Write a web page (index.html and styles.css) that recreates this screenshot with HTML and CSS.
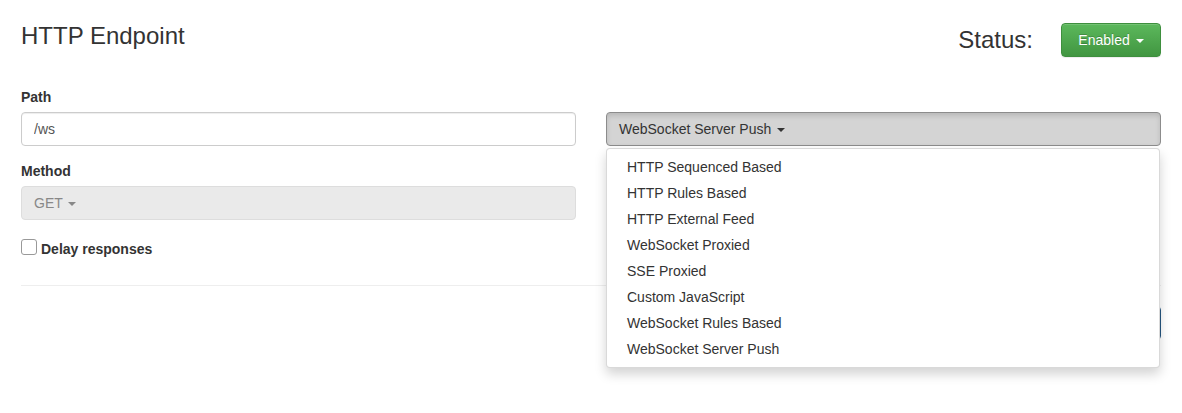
FILE: index.html
```html
<!DOCTYPE html>
<html lang="en">
<head>
    <meta charset="UTF-8">
    <meta name="viewport" content="width=device-width, initial-scale=1.0">
    <title>HTTP Endpoint</title>
    <link rel="stylesheet" href="styles.css">
</head>
<body>

    <div class="page">
        <!-- Header -->
        <div class="header">
            <h3 class="title">HTTP Endpoint</h3>
            <div class="status">
                <span class="status-label">Status:</span>
                <button class="btn btn-success">Enabled <span class="caret"></span></button>
            </div>
        </div>

        <!-- Form -->
        <div class="form-row">
            <div class="col">
                <div class="form-group">
                    <label class="field-label" for="path">Path</label>
                    <input type="text" id="path" class="form-control" value="/ws">
                </div>

                <div class="form-group">
                    <label class="field-label">Method</label>
                    <div class="form-control disabled">GET <span class="caret"></span></div>
                </div>

                <label class="checkbox">
                    <span class="check-box"></span>
                    <span>Delay responses</span>
                </label>
            </div>

            <div class="col col-type">
                <div class="btn-group">
                    <button class="btn btn-default active">WebSocket Server Push <span class="caret"></span></button>
                    <ul class="dropdown-menu">
                        <li><a href="#">HTTP Sequenced Based</a></li>
                        <li><a href="#">HTTP Rules Based</a></li>
                        <li><a href="#">HTTP External Feed</a></li>
                        <li><a href="#">WebSocket Proxied</a></li>
                        <li><a href="#">SSE Proxied</a></li>
                        <li><a href="#">Custom JavaScript</a></li>
                        <li><a href="#">WebSocket Rules Based</a></li>
                        <li><a href="#">WebSocket Server Push</a></li>
                    </ul>
                </div>
            </div>
        </div>

        <hr class="divider">

        <div class="footer">
            <button class="btn btn-primary">Save Changes</button>
        </div>
    </div>

</body>
</html>
```

FILE: styles.css
```css
/* Page */
body {
    margin: 0;
    font-family: "Liberation Sans", Arial, sans-serif;
    font-size: 14px;
    line-height: 20px;
    color: #333;
    background: #fff;
}

.page {
    box-sizing: border-box;
    min-height: 100vh;
    padding: 23px 21px 0;
}

/* Header */
.header {
    display: flex;
    justify-content: space-between;
    align-items: flex-start;
}

.title {
    margin: 0;
    font-size: 24px;
    font-weight: normal;
    line-height: 26.4px;
}

.status {
    display: flex;
    align-items: center;
    gap: 28px;
}

.status-label {
    font-size: 24px;
    line-height: 34px;
}

/* Buttons */
.btn {
    font-family: inherit;
    font-size: 14px;
    line-height: 20px;
    height: 34px;
    padding: 6px 12px;
    border: 1px solid transparent;
    border-radius: 4px;
    cursor: pointer;
}

.btn-success {
    width: 100px;
    color: #fff;
    background: linear-gradient(to bottom, #5cb85c 0, #419641 100%);
    border-color: #3e8f3e;
    text-shadow: 0 -1px 0 rgba(0, 0, 0, .2);
    box-shadow: inset 0 1px 0 rgba(255, 255, 255, .15), 0 1px 1px rgba(0, 0, 0, .075);
}

.btn-default.active {
    width: 100%;
    text-align: left;
    color: #333;
    background: #d4d4d4;
    border-color: #8c8c8c;
    box-shadow: inset 0 3px 5px rgba(0, 0, 0, .125);
}

.btn-primary {
    color: #fff;
    background: linear-gradient(to bottom, #337ab7 0, #265a88 100%);
    border-color: #245580;
}

.caret {
    display: inline-block;
    width: 0;
    height: 0;
    margin-left: 2px;
    vertical-align: middle;
    border-top: 4px solid;
    border-left: 4px solid transparent;
    border-right: 4px solid transparent;
}

/* Form */
.form-row {
    display: grid;
    grid-template-columns: 1fr 1fr;
    gap: 30px;
    margin-top: 30px;
}

.form-group {
    margin-bottom: 15px;
}

.field-label {
    display: block;
    margin-bottom: 5px;
    font-weight: bold;
}

.form-control {
    display: block;
    box-sizing: border-box;
    width: 100%;
    height: 34px;
    padding: 6px 12px;
    font-family: inherit;
    font-size: 14px;
    line-height: 20px;
    color: #555;
    background: #fff;
    border: 1px solid #ccc;
    border-radius: 4px;
    box-shadow: inset 0 1px 1px rgba(0, 0, 0, .075);
}

.form-control.disabled {
    color: #888;
    background: #eaeaea;
    border-color: #ddd;
    box-shadow: none;
}

.checkbox {
    display: flex;
    align-items: flex-start;
    gap: 4px;
    margin-top: 19px;
    font-weight: bold;
}

.check-box {
    box-sizing: border-box;
    width: 16px;
    height: 16px;
    border: 1px solid #999;
    border-radius: 3px;
    background: #fff;
}

/* Type dropdown */
.col-type {
    padding-top: 25px;
}

.btn-group {
    position: relative;
}

.dropdown-menu {
    position: absolute;
    top: 100%;
    left: 0;
    right: 1px;
    z-index: 10;
    margin: 2px 0 0;
    padding: 5px 0;
    list-style: none;
    background: #fff;
    border: 1px solid rgba(0, 0, 0, .15);
    border-radius: 4px;
    box-shadow: 0 6px 12px rgba(0, 0, 0, .175);
}

.dropdown-menu a {
    display: block;
    padding: 3px 20px;
    color: #333;
    text-decoration: none;
    white-space: nowrap;
}

/* Footer */
.divider {
    margin: 26px 0 0;
    border: 0;
    border-top: 1px solid #eee;
}

.footer {
    display: flex;
    justify-content: flex-end;
    padding-top: 20px;
}
```
